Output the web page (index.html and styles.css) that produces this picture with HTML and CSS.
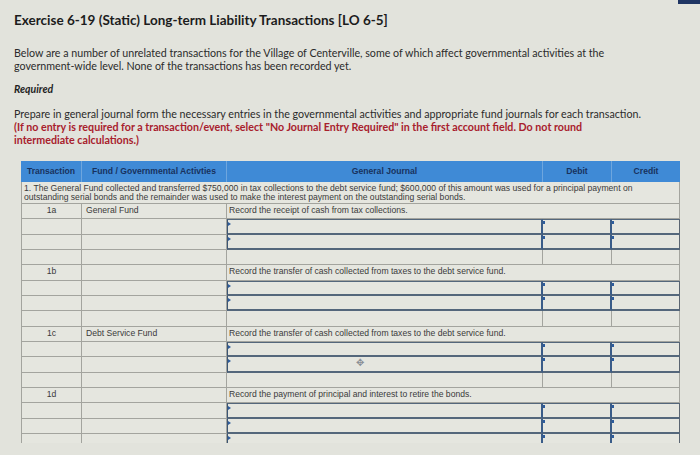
FILE: index.html
```html
<!DOCTYPE html>
<html lang="en">
<head>
<meta charset="utf-8">
<title>Exercise 6-19</title>
<link rel="stylesheet" href="styles.css">
</head>
<body>
<div class="topbar"><span class="topbar-block"></span></div>
<div class="page">
  <h1 class="title">Exercise 6-19 (Static) Long-term Liability Transactions [LO 6-5]</h1>
  <p class="intro">Below are a number of unrelated transactions for the Village of Centerville, some of which affect governmental activities at the government-wide level. None of the transactions has been recorded yet.</p>
  <p class="required">Required</p>
  <p class="prepare">Prepare in general journal form the necessary entries in the governmental activities and appropriate fund journals for each transaction. <strong class="warn">(If no entry is required for a transaction/event, select "No Journal Entry Required" in the first account field. Do not round intermediate calculations.)</strong></p>

  <div class="journal">
    <div class="row head">
      <div class="c c1">Transaction</div>
      <div class="c c2">Fund / Governmental Activties</div>
      <div class="c c3">General Journal</div>
      <div class="c c4">Debit</div>
      <div class="c c5">Credit</div>
    </div>
    <div class="row desc">
      <div class="c cfull"><span class="desc-text">1. The General Fund collected and transferred $750,000 in tax collections to the debt service fund; $600,000 of this amount was used for a principal payment on outstanding serial bonds and the remainder was used to make the interest payment on the outstanding serial bonds.</span></div>
    </div>

    <div class="row">
      <div class="c c1 ctr">1a</div>
      <div class="c c2">General Fund</div>
      <div class="c cnote">Record the receipt of cash from tax collections.</div>
    </div>
    <div class="row top"><div class="c c1"></div><div class="c c2"></div><div class="c c3 in"></div><div class="c c4 in"></div><div class="c c5 in"></div></div>
    <div class="row"><div class="c c1"></div><div class="c c2"></div><div class="c c3 in"></div><div class="c c4 in"></div><div class="c c5 in"></div></div>
    <div class="row"><div class="c c1"></div><div class="c c2"></div><div class="c c3"></div><div class="c c4"></div><div class="c c5"></div></div>

    <div class="row">
      <div class="c c1 ctr">1b</div>
      <div class="c c2"></div>
      <div class="c cnote">Record the transfer of cash collected from taxes to the debt service fund.</div>
    </div>
    <div class="row top"><div class="c c1"></div><div class="c c2"></div><div class="c c3 in"></div><div class="c c4 in"></div><div class="c c5 in"></div></div>
    <div class="row"><div class="c c1"></div><div class="c c2"></div><div class="c c3 in"></div><div class="c c4 in"></div><div class="c c5 in"></div></div>
    <div class="row"><div class="c c1"></div><div class="c c2"></div><div class="c c3"></div><div class="c c4"></div><div class="c c5"></div></div>

    <div class="row">
      <div class="c c1 ctr">1c</div>
      <div class="c c2">Debt Service Fund</div>
      <div class="c cnote">Record the transfer of cash collected from taxes to the debt service fund.</div>
    </div>
    <div class="row top"><div class="c c1"></div><div class="c c2"></div><div class="c c3 in"></div><div class="c c4 in"></div><div class="c c5 in"></div></div>
    <div class="row"><div class="c c1"></div><div class="c c2"></div><div class="c c3 in"><span class="cursor">✥</span></div><div class="c c4 in"></div><div class="c c5 in"></div></div>
    <div class="row"><div class="c c1"></div><div class="c c2"></div><div class="c c3"></div><div class="c c4"></div><div class="c c5"></div></div>

    <div class="row">
      <div class="c c1 ctr">1d</div>
      <div class="c c2"></div>
      <div class="c cnote">Record the payment of principal and interest to retire the bonds.</div>
    </div>
    <div class="row top"><div class="c c1"></div><div class="c c2"></div><div class="c c3 in"></div><div class="c c4 in"></div><div class="c c5 in"></div></div>
    <div class="row"><div class="c c1"></div><div class="c c2"></div><div class="c c3 in"></div><div class="c c4 in"></div><div class="c c5 in"></div></div>
    <div class="row last"><div class="c c1"></div><div class="c c2"></div><div class="c c3 in"></div><div class="c c4 in"></div><div class="c c5 in"></div></div>
  </div>
</div>
</body>
</html>
```

FILE: styles.css
```css
html, body {
  margin: 0;
  padding: 0;
  background: #e2e3dc;
  overflow: hidden;
}
body {
  font-family: Lato, "Liberation Sans", sans-serif;
  color: #2b2b2b;
}
.topbar {
  display: flex;
  justify-content: flex-end;
  height: 4px;
}
.topbar-block {
  width: 22px;
  height: 4px;
  background: #1f3563;
}
.page {
  padding: 8px 14px 0 14px;
}
.title {
  margin: 0;
  font-size: 13.5px;
  line-height: 16px;
  font-weight: 700;
  color: #1c1c1c;
}
.intro {
  margin: 18px 0 0 0;
  width: 620px;
  font-size: 10.7px;
  line-height: 13px;
}
.required {
  margin: 11px 0 0 0;
  font-size: 10.5px;
  line-height: 13px;
  font-weight: 700;
  font-style: italic;
  color: #1f1f1f;
}
.prepare {
  margin: 11px 0 0 0;
  width: 650px;
  font-size: 10.7px;
  line-height: 13px;
}
.warn {
  display: block;
  width: 600px;
  color: #a8202c;
  font-weight: 700;
}

.journal {
  margin: 15px 0 0 7px;
  width: 659px;
  font-family: "Liberation Sans", Arial, sans-serif;
  font-size: 8.6px;
  color: #3a3a3a;
  background: #e5e6df;
}
.row {
  display: flex;
  height: 15.35px;
}
.row.head {
  height: 21px;
  background: #3f8ad6;
}
.row.desc {
  height: 22px;
}
.row.last {
  height: 9px;
}
.row.last .c {
  border-bottom: none;
}
.c {
  position: relative;
  box-sizing: border-box;
  height: 100%;
  border-right: 1px solid #a3a49e;
  border-bottom: 1px solid #a3a49e;
  line-height: 13px;
  white-space: nowrap;
  overflow: hidden;
}
.c1 { width: 61px; border-left: 1px solid #a3a49e; }
.c2 { width: 145px; padding-left: 4px; }
.c3 { width: 316px; }
.c4 { width: 69px; }
.c5 { width: 68px; }
.cnote { width: 453px; padding-left: 2px; }
.cfull {
  width: 659px;
  border-left: 1px solid #a3a49e;
  padding: 2px 0 0 2px;
  white-space: normal;
  line-height: 9px;
  font-size: 8.6px;
}
.desc-text {
  display: block;
  width: 618px;
}
.ctr { text-align: center; }

.head .c {
  display: flex;
  align-items: center;
  justify-content: center;
  padding: 0;
  font-weight: 700;
  color: #18325e;
  border-color: #6ea6de;
  border-bottom: none;
}
.head .c1 { border-left: none; }
.head .c5 { border-right: none; }

.in {
  border-bottom: 2px solid #54677b;
}
.row.top .in {
  border-top: 1px solid #54677b;
}
.c3.in {
  border-left: 1px solid #3c5674;
  border-right: 2px solid #3a5c88;
}
.c4.in {
  border-right: 2px solid #3a5c88;
}
.c5.in {
  border-right: 1px solid #5a6470;
}
.c3.in::before {
  content: "";
  position: absolute;
  left: 0;
  top: 2px;
  border-left: 3px solid #2d5c9c;
  border-top: 2px solid transparent;
  border-bottom: 2px solid transparent;
}
.c4.in::before, .c5.in::before {
  content: "";
  position: absolute;
  left: 0;
  top: 1px;
  width: 2px;
  height: 3px;
  background: #2d5c9c;
}
.cursor {
  position: absolute;
  left: 128px;
  top: 0px;
  font-size: 10px;
  line-height: 12px;
  color: #8a8f96;
}
```
